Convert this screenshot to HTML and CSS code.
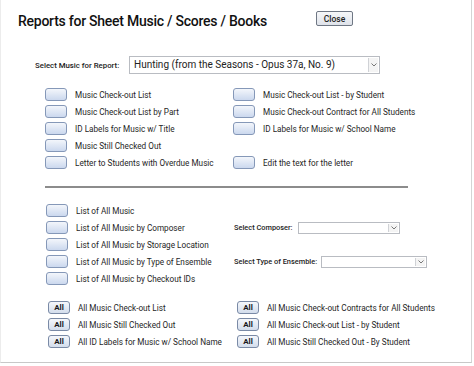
FILE: index.html
```html
<!DOCTYPE html>
<html lang="en">
<head>
  <meta charset="UTF-8">
  <title>Reports for Sheet Music / Scores / Books</title>
  <link rel="stylesheet" href="styles.css">
</head>
<body>
  <div class="frame">
    <div class="header">
      <h1 class="title">Reports for Sheet Music / Scores / Books</h1>
      <button class="close-btn">Close</button>
    </div>

    <div class="music-select">
      <span class="small-label">Select Music for Report:</span>
      <div class="combo combo-music">
        <span class="combo-text">Hunting (from the Seasons - Opus 37a, No. 9)</span>
        <span class="combo-arrow"><svg width="6" height="4" viewBox="0 0 6 4"><path d="M0.5 0.5 L3 3 L5.5 0.5" fill="none" stroke="#777" stroke-width="1"/></svg></span>
      </div>
    </div>

    <!-- reports for the selected music -->
    <div class="report-grid">
      <div class="report"><span class="rbtn"></span><span class="rlabel">Music Check-out List</span></div>
      <div class="report"><span class="rbtn"></span><span class="rlabel">Music Check-out List - by Student</span></div>
      <div class="report"><span class="rbtn"></span><span class="rlabel">Music Check-out List by Part</span></div>
      <div class="report"><span class="rbtn"></span><span class="rlabel">Music Check-out Contract for All Students</span></div>
      <div class="report"><span class="rbtn"></span><span class="rlabel">ID Labels for Music w/ Title</span></div>
      <div class="report"><span class="rbtn"></span><span class="rlabel">ID Labels for Music w/ School Name</span></div>
      <div class="report"><span class="rbtn"></span><span class="rlabel">Music Still Checked Out</span></div>
      <div class="report"></div>
      <div class="report"><span class="rbtn"></span><span class="rlabel">Letter to Students with Overdue Music</span></div>
      <div class="report"><span class="rbtn"></span><span class="rlabel">Edit the text for the letter</span></div>
    </div>

    <div class="divider"></div>

    <!-- lists of all music -->
    <div class="list-grid">
      <div class="report"><span class="rbtn"></span><span class="rlabel">List of All Music</span></div>
      <div></div>
      <div class="report"><span class="rbtn"></span><span class="rlabel">List of All Music by Composer</span></div>
      <div class="filter">
        <span class="small-label filter-composer">Select Composer:</span>
        <div class="combo combo-composer">
          <span class="combo-text"></span>
          <span class="combo-arrow"><svg width="6" height="4" viewBox="0 0 6 4"><path d="M0.5 0.5 L3 3 L5.5 0.5" fill="none" stroke="#777" stroke-width="1"/></svg></span>
        </div>
      </div>
      <div class="report"><span class="rbtn"></span><span class="rlabel">List of All Music by Storage Location</span></div>
      <div></div>
      <div class="report"><span class="rbtn"></span><span class="rlabel">List of All Music by Type of Ensemble</span></div>
      <div class="filter">
        <span class="small-label filter-ensemble">Select Type of Ensemble:</span>
        <div class="combo combo-ensemble">
          <span class="combo-text"></span>
          <span class="combo-arrow"><svg width="6" height="4" viewBox="0 0 6 4"><path d="M0.5 0.5 L3 3 L5.5 0.5" fill="none" stroke="#777" stroke-width="1"/></svg></span>
        </div>
      </div>
      <div class="report"><span class="rbtn"></span><span class="rlabel">List of All Music by Checkout IDs</span></div>
      <div></div>
    </div>

    <!-- reports for all music -->
    <div class="all-grid">
      <div class="report"><span class="rbtn all-btn">All</span><span class="rlabel">All Music Check-out List</span></div>
      <div class="report"><span class="rbtn all-btn">All</span><span class="rlabel">All Music Check-out Contracts for All Students</span></div>
      <div class="report"><span class="rbtn all-btn">All</span><span class="rlabel">All Music Still Checked Out</span></div>
      <div class="report"><span class="rbtn all-btn">All</span><span class="rlabel">All Music Check-out List - by Student</span></div>
      <div class="report"><span class="rbtn all-btn">All</span><span class="rlabel">All ID Labels for Music w/ School Name</span></div>
      <div class="report"><span class="rbtn all-btn">All</span><span class="rlabel">All Music Still Checked Out - By Student</span></div>
    </div>
  </div>
</body>
</html>
```

FILE: styles.css
```css
body {
  margin: 0;
  padding: 0;
  background-color: #fff;
  font-family: Roboto, "Open Sans", sans-serif;
  color: #1e1e1e;
}

.frame {
  width: 472px;
  height: 363px;
  box-sizing: border-box;
  border-right: 1px solid #d4d4d4;
  border-bottom: 1px solid #c8c8c8;
  border-left: 1px solid #ececec;
}

.header {
  display: flex;
  align-items: flex-start;
  padding: 11px 0 0 17px;
  height: 45px;
  box-sizing: border-box;
}

.title {
  margin: 2px 0 0 0;
  font-size: 14px;
  font-weight: 500;
  width: 298px;
  letter-spacing: -0.25px;
  color: #111;
}

.close-btn {
  width: 37px;
  height: 15px;
  padding: 0;
  font-family: inherit;
  font-size: 8.5px;
  font-weight: 500;
  color: #222;
  border: 1px solid #6f7784;
  border-radius: 2px;
  background: linear-gradient(#f6f7f9, #dfe3ea);
}

.music-select {
  display: flex;
  align-items: center;
  padding-left: 34px;
  margin-top: 11px;
  height: 18px;
}

.small-label {
  font-size: 7.8px;
  font-weight: 500;
  color: #222;
  white-space: nowrap;
}

.music-select .small-label {
  width: 94px;
}

.combo {
  display: flex;
  align-items: stretch;
  box-sizing: border-box;
  border: 1px solid #b9bcc2;
  background: #fff;
}

.combo-music {
  width: 251px;
  height: 18px;
}

.combo-text {
  flex: 1;
  font-size: 10px;
  line-height: 16px;
  padding-left: 4px;
  color: #222;
  white-space: nowrap;
  overflow: hidden;
}

.combo-arrow {
  width: 9px;
  display: flex;
  align-items: center;
  justify-content: center;
  border-left: 1px solid #d0d2d6;
  background: #f4f4f4;
  margin: 1px;
}

.report-grid {
  display: grid;
  grid-template-columns: 188px auto;
  grid-auto-rows: 17px;
  padding-left: 44px;
  margin-top: 12px;
}

.report {
  display: flex;
  align-items: center;
}

.rbtn {
  display: inline-block;
  width: 22px;
  height: 13px;
  box-sizing: border-box;
  border: 1px solid #8598b8;
  border-radius: 3px;
  background: linear-gradient(#f3f6fb, #cbd8ee);
  flex-shrink: 0;
}

.rlabel {
  margin-left: 8px;
  font-size: 8.2px;
  color: #262626;
  white-space: nowrap;
}

.divider {
  width: 363px;
  height: 0;
  border-top: 2px solid #8c8c8c;
  margin: 15px 0 0 44px;
}

.list-grid {
  display: grid;
  grid-template-columns: 188px auto;
  grid-auto-rows: 17px;
  padding-left: 45px;
  margin-top: 14px;
}

.filter {
  display: flex;
  align-items: center;
}

.filter .small-label {
  font-size: 7.4px;
}

.filter-composer {
  width: 64px;
}

.filter-ensemble {
  width: 87px;
}

.filter .combo {
  height: 12px;
}

.combo-composer {
  width: 102px;
}

.combo-ensemble {
  width: 106px;
}

.all-grid {
  display: grid;
  grid-template-columns: 189px auto;
  grid-auto-rows: 17px;
  padding-left: 47px;
  margin-top: 12px;
}

.all-btn {
  font-size: 8px;
  font-weight: 700;
  line-height: 11px;
  text-align: center;
  color: #1a1a1a;
  border-color: #7a8aa6;
  background: linear-gradient(#f5f7fb, #d3ddec);
}
```
